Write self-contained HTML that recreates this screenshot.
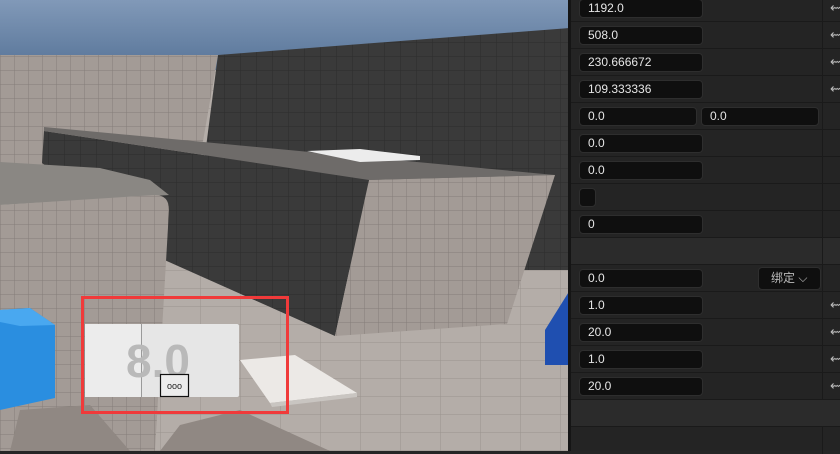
<!DOCTYPE html>
<html><head><meta charset="utf-8"><style>
body{margin:0;width:840px;height:451px;overflow:hidden;background:#252525;font-family:"Liberation Sans","Noto Sans CJK SC",sans-serif;position:relative}
#scene{position:absolute;left:0;top:0}
#panel{position:absolute;left:568px;top:0;width:272px;height:451px;background:#242424;border-left:3px solid #151515;box-sizing:border-box}
.row{position:absolute;left:0;width:272px;height:26px;border-bottom:1px solid #1a1a1a}
.row .div{position:absolute;left:251px;top:0;width:1px;height:27px;background:#1a1a1a}
.inp{position:absolute;top:4px;height:19px;background:#0f0f0f;border:1px solid #2e2e2e;border-radius:4px;box-sizing:border-box;color:#e6e6e6;font-size:12px;line-height:17px;padding-left:8px}
.arr{position:absolute;left:259px;top:5px;color:#bbb;font-size:13px}
</style></head><body>
<svg id="scene" width="570" height="451" viewBox="0 0 570 451">
<defs>
<linearGradient id="sky" x1="0" y1="0" x2="0" y2="1"><stop offset="0" stop-color="#8199b8"/><stop offset="1" stop-color="#577498"/></linearGradient>
<pattern id="g1" width="14" height="14" patternUnits="userSpaceOnUse"><rect width="14" height="14" fill="#a39b96"/><path d="M0 0H14M0 0V14" stroke="#857e79" stroke-width="1"/></pattern>
<pattern id="g2" width="16" height="14" patternUnits="userSpaceOnUse"><rect width="16" height="14" fill="#3a3a3a"/><path d="M0 0H16M0 0V14" stroke="#2c2c2c" stroke-width="1"/></pattern>
<pattern id="g3" width="40" height="18" patternUnits="userSpaceOnUse"><rect width="40" height="18" fill="#b4ada8"/><path d="M0 0H40M0 0V18" stroke="#9a938e" stroke-width="1"/></pattern>
</defs>
<rect width="570" height="451" fill="url(#g3)"/>
<rect width="570" height="70" fill="url(#sky)"/>
<polygon points="218,55 570,28 570,270 190,270" fill="url(#g2)"/>
<polygon points="0,55 218,55 198,170 0,170" fill="url(#g1)"/>
<polygon points="44,131 369,180 335,336 160,258 42,163" fill="url(#g2)"/>
<polygon points="44,127 555,175 369,180 44,131" fill="#6e6b69"/>
<polygon points="369,180 555,175 507,324 335,336" fill="url(#g1)"/>
<polygon points="307,151 360,149 420,156 420,160 360,162" fill="#ececec"/>
<polygon points="0,162 100,168 150,180 169,195 0,205" fill="#8a8783"/>
<path d="M0 205 L155 195 Q169 195 169 210 L155 451 L0 451 Z" fill="url(#g1)"/>
<polygon points="0,310 30,308 55,325 55,398 0,410" fill="#2a8ee0"/>
<polygon points="0,310 30,308 55,325 20,326 0,322" fill="#49a8f0"/>
<polygon points="545,330 570,290 570,365 545,365" fill="#1f4fb0"/>
<polygon points="20,410 90,405 130,451 10,451" fill="#908883"/>
<polygon points="180,425 240,410 330,451 160,451" fill="#908883"/>
<polygon points="240,360 295,355 357,393 270,403" fill="#ece9e6"/>
<polygon points="270,403 357,393 357,397 272,407" fill="#c9c5c1"/>
<rect x="85" y="324" width="154" height="73" rx="2" fill="#e6e6e6"/>
<rect x="85" y="324" width="56" height="73" fill="#ececec"/>
<line x1="141.5" y1="324" x2="141.5" y2="397" stroke="#9a9a9a"/>
<text x="158" y="377" font-family="Liberation Sans" font-weight="bold" font-size="46" fill="#b9b9b9" text-anchor="middle">8.0</text>
<rect x="160.5" y="374.5" width="28" height="22" fill="#ececec" stroke="#111" stroke-width="1.2"/>
<text x="174.5" y="389" font-family="Liberation Sans" font-size="9" fill="#222" text-anchor="middle">ooo</text>
<rect x="82.5" y="297.5" width="205" height="115" fill="none" stroke="#f03a3a" stroke-width="3"/>
</svg>
<div id="panel">
<div class="row" style="top:-5px"><div class="div"></div><div class="inp" style="left:8px;width:124px">1192.0</div><div class="arr">⇜</div></div>
<div class="row" style="top:22px"><div class="div"></div><div class="inp" style="left:8px;width:124px">508.0</div><div class="arr">⇜</div></div>
<div class="row" style="top:49px"><div class="div"></div><div class="inp" style="left:8px;width:124px">230.666672</div><div class="arr">⇜</div></div>
<div class="row" style="top:76px"><div class="div"></div><div class="inp" style="left:8px;width:124px">109.333336</div><div class="arr">⇜</div></div>
<div class="row" style="top:103px"><div class="div"></div><div class="inp" style="left:8px;width:118px">0.0</div><div class="inp" style="left:130px;width:118px">0.0</div></div>
<div class="row" style="top:130px"><div class="div"></div><div class="inp" style="left:8px;width:124px">0.0</div></div>
<div class="row" style="top:157px"><div class="div"></div><div class="inp" style="left:8px;width:124px">0.0</div></div>
<div class="row" style="top:184px"><div class="div"></div><div class="inp" style="left:8px;width:17px"></div></div>
<div class="row" style="top:211px"><div class="div"></div><div class="inp" style="left:8px;width:124px">0</div></div>
<div class="row" style="top:238px;background:#2b2b2b"><div class="div"></div></div>
<div class="row" style="top:265px"><div class="div"></div><div class="inp" style="left:8px;width:124px">0.0</div><div class="inp" style="left:187px;width:63px;height:23px;top:2px;line-height:21px;padding-left:12px;color:#bbb">绑定 ⌵</div></div>
<div class="row" style="top:292px"><div class="div"></div><div class="inp" style="left:8px;width:124px">1.0</div><div class="arr">⇜</div></div>
<div class="row" style="top:319px"><div class="div"></div><div class="inp" style="left:8px;width:124px">20.0</div><div class="arr">⇜</div></div>
<div class="row" style="top:346px"><div class="div"></div><div class="inp" style="left:8px;width:124px">1.0</div><div class="arr">⇜</div></div>
<div class="row" style="top:373px"><div class="div"></div><div class="inp" style="left:8px;width:124px">20.0</div><div class="arr">⇜</div></div>
<div class="row" style="top:400px;background:#2b2b2b"></div>
<div class="row" style="top:427px;border:none"><div class="div"></div></div>
</div>
</body></html>
